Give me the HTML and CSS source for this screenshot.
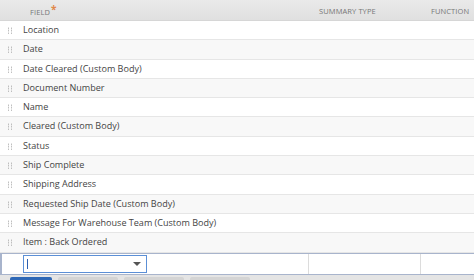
FILE: index.html
```html
<!DOCTYPE html>
<html lang="en">
<head>
<meta charset="UTF-8" />
<title>Results Fields</title>
<link rel="stylesheet" href="styles.css">
</head>
<body>
<div class="machine">
  <div class="head-row">
    <div class="cell handle-cell"></div>
    <div class="cell field-cell">FIELD<span class="req">*</span></div>
    <div class="cell summary-cell">SUMMARY TYPE</div>
    <div class="cell function-cell">FUNCTION</div>
  </div>
  <div id="rows"></div>
  <div class="edit-row">
    <div class="cell handle-cell"></div>
    <div class="cell field-cell">
      <div class="select-box"><span class="caret-line"></span><span class="arrow"></span></div>
    </div>
    <div class="cell summary-cell"></div>
    <div class="cell function-cell"></div>
  </div>
  <div class="button-bar">
    <span class="btn btn-primary"></span>
    <span class="btn"></span>
    <span class="btn"></span>
    <span class="btn"></span>
  </div>
</div>

<script>
const fields = [
    'Location',
    'Date',
    'Date Cleared (Custom Body)',
    'Document Number',
    'Name',
    'Cleared (Custom Body)',
    'Status',
    'Ship Complete',
    'Shipping Address',
    'Requested Ship Date (Custom Body)',
    'Message For Warehouse Team (Custom Body)',
    'Item : Back Ordered'
];
const rows = document.getElementById('rows');
fields.forEach((name, i) => {
    const row = document.createElement('div');
    row.className = 'data-row' + (i % 2 ? ' odd' : '');
    row.innerHTML = `
        <div class="cell handle-cell"><span class="grip"></span></div>
        <div class="cell field-cell">${name}</div>
        <div class="cell summary-cell"></div>
        <div class="cell function-cell"></div>`;
    rows.appendChild(row);
});
</script>
</body>
</html>
```

FILE: styles.css
```css
body {
    margin: 0;
    font-family: 'Open Sans', 'Liberation Sans', sans-serif;
    background-color: #ffffff;
}
.machine {
    width: 474px;
    height: 280px;
    overflow: hidden;
}
.head-row, .data-row, .edit-row {
    display: flex;
}
.cell {
    box-sizing: border-box;
}
.handle-cell {
    width: 20px;
    flex: none;
}
.field-cell {
    width: 288px;
    flex: none;
    padding-left: 3px;
    white-space: nowrap;
}
.summary-cell {
    width: 112px;
    flex: none;
    padding-left: 11px;
}
.function-cell {
    flex: 1;
    padding-left: 11px;
    white-space: nowrap;
}
.head-row {
    height: 21px;
    background: linear-gradient(#eaeaea, #e0e0e0);
    color: #777;
    font-size: 7.5px;
    line-height: 22px;
    letter-spacing: 0.1px;
    border-bottom: 1px solid #d6d6d6;
    box-sizing: border-box;
}
.head-row .field-cell {
    padding-left: 10px;
}
.req {
    color: #e0884a;
    font-size: 10px;
    font-weight: bold;
    position: relative;
    top: -2px;
    margin-left: 1px;
}
.data-row {
    height: 19.3px;
    line-height: 18px;
    font-size: 9.05px;
    color: #444;
    border-bottom: 1px solid #e6e6e6;
    box-sizing: border-box;
    background-color: #ffffff;
}
.data-row.odd {
    background-color: #f8f8f8;
}
.grip {
    display: block;
    width: 5px;
    height: 7px;
    margin: 6px 0 0 7px;
    background-image: radial-gradient(circle, #b0b0b0 0.7px, transparent 0.9px);
    background-size: 3px 2.5px;
}
.edit-row {
    height: 22px;
    border-top: 1px solid #a8b4cc;
    border-bottom: 1px solid #a8b4cc;
    box-sizing: border-box;
    background-color: #ffffff;
}
.edit-row .handle-cell {
    border-left: 2px solid #a8b4cc;
}
.edit-row .field-cell {
    padding: 1px 0 0 3px;
}
.edit-row .summary-cell,
.edit-row .function-cell {
    border-left: 1px solid #dcdcdc;
}
.select-box {
    width: 124px;
    height: 18px;
    border: 1px solid #5b8fd6;
    box-sizing: border-box;
    position: relative;
    background-color: #ffffff;
}
.caret-line {
    position: absolute;
    left: 3px;
    top: 3px;
    width: 1px;
    height: 10px;
    background-color: #2d5fb0;
}
.arrow {
    position: absolute;
    right: 5px;
    top: 6px;
    border-left: 4px solid transparent;
    border-right: 4px solid transparent;
    border-top: 4px solid #555;
}
.button-bar {
    display: flex;
    gap: 6px;
    padding: 2px 0 0 10px;
    height: 20px;
    background-color: #e4e4e4;
}
.btn {
    width: 60px;
    height: 16px;
    background-color: #d4d4d4;
    border-radius: 2px;
}
.btn-primary {
    width: 42px;
    background-color: #2d67b6;
}
```
